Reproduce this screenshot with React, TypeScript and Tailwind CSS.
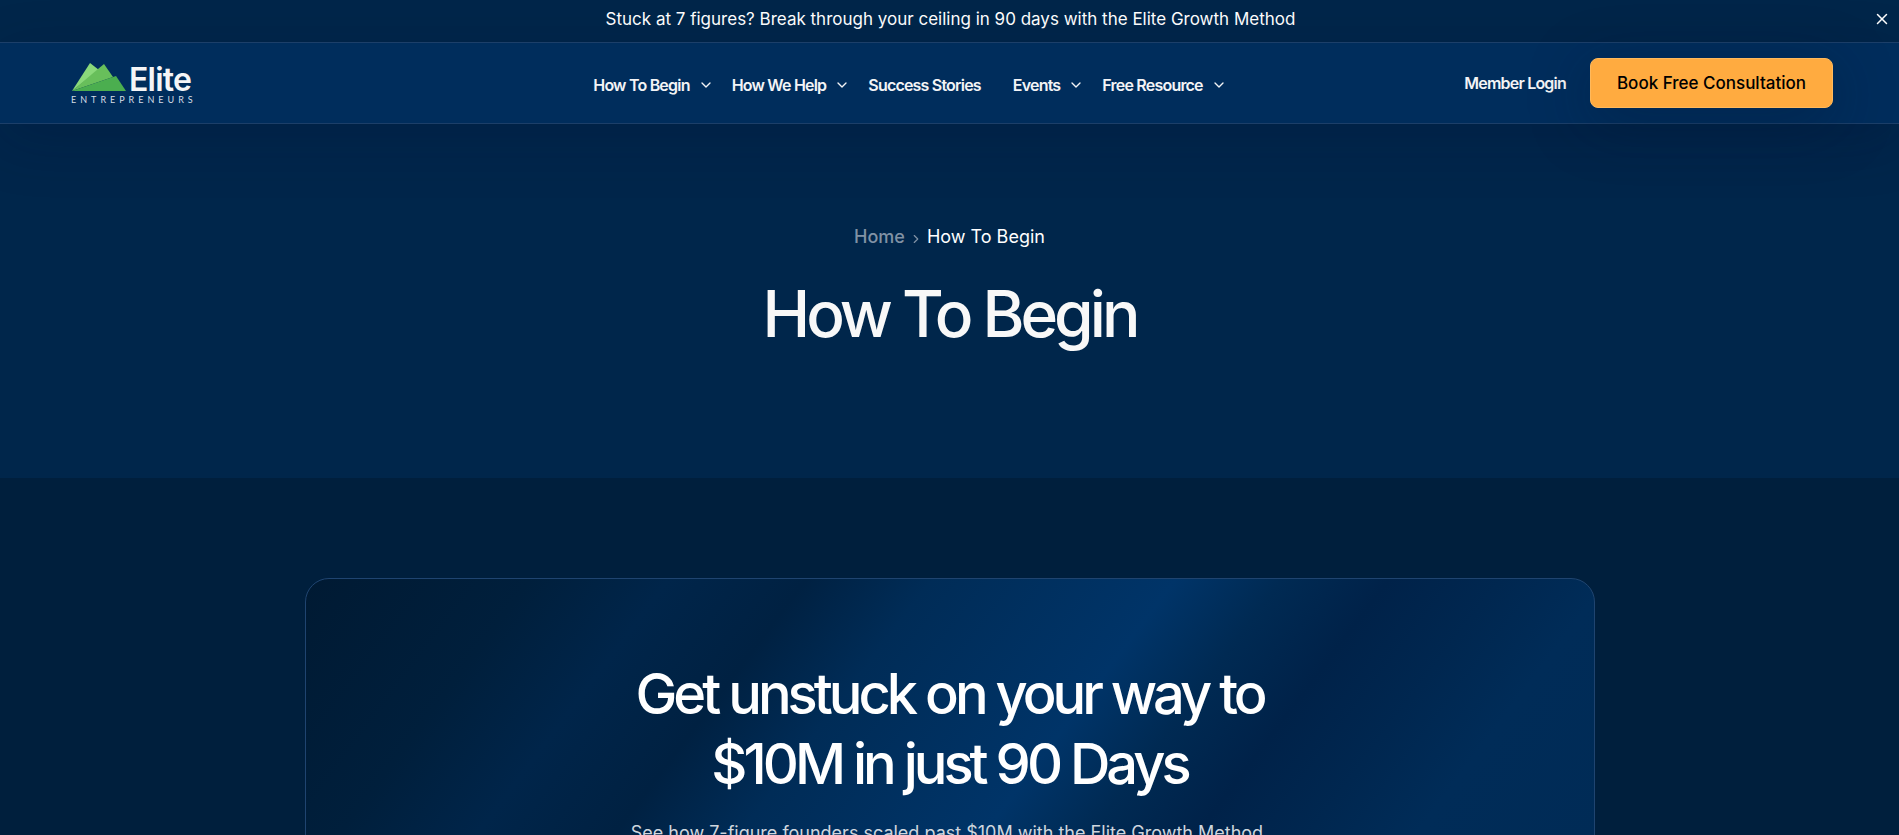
import { useState } from "react";
import { ChevronDown, ChevronRight, X } from "lucide-react";

interface NavItem {
  label: string;
  hasMenu: boolean;
}

const navItems: NavItem[] = [
  { label: "How To Begin", hasMenu: true },
  { label: "How We Help", hasMenu: true },
  { label: "Success Stories", hasMenu: false },
  { label: "Events", hasMenu: true },
  { label: "Free Resource", hasMenu: true },
];

function Logo() {
  return (
    <svg width="128" height="44" viewBox="0 0 128 44" role="img" aria-label="Elite Entrepreneurs">
      <polygon points="1,30 19,2 28,9" fill="#8ad97a" />
      <polygon points="1,30 27,8 33,3 42,16" fill="#68bf5b" />
      <polygon points="1,30 42,16 45,15 55,30" fill="#4bae4f" />
      <text x="58" y="30" fontSize="32" fontWeight="600" fill="#f5f5f7" className="font-['Inter',sans-serif] tracking-tight">
        Elite
      </text>
      <text x="0" y="42" fontSize="9" fill="#d5dde6" className="font-['Lato',sans-serif] tracking-[4px]">
        ENTREPRENEURS
      </text>
    </svg>
  );
}

export default function App() {
  const [showBanner, setShowBanner] = useState(true);

  return (
    <div className="min-h-screen bg-[#001f3d] font-['Inter',sans-serif] text-white">
      {showBanner && (
        <div className="flex items-center bg-[#00264a] px-2 pt-[7px] pb-[11px]">
          <p className="flex-1 pl-5 text-center text-[17px] leading-6">
            Stuck at 7 figures? Break through your ceiling in 90 days with the Elite Growth Method
          </p>
          <button type="button" aria-label="Close" onClick={() => setShowBanner(false)}>
            <X size={18} strokeWidth={2} />
          </button>
        </div>
      )}

      <header className="relative grid grid-cols-[11fr_auto_13fr] items-center border-y border-[#1c3f69] bg-[#002d5c] px-[66px] py-[15px] shadow-[0_16px_60px_rgba(0,16,48,0.2)]">
        <a href="#" className="justify-self-start pl-[5px]">
          <Logo />
        </a>
        <nav className="flex pt-1">
          {navItems.map((item) => (
            <a
              key={item.label}
              href="#"
              className="flex items-center px-4 text-base font-semibold tracking-tighter whitespace-nowrap text-gray-100"
            >
              {item.label}
              {item.hasMenu && <ChevronDown size={16} className="-mr-[14px] ml-2" />}
            </a>
          ))}
        </nav>
        <div className="flex items-center gap-6 justify-self-end">
          <a href="#" className="text-base font-semibold tracking-tighter text-gray-100">
            Member Login
          </a>
          <a
            href="#"
            className="rounded-lg border border-[#ffb95c] bg-[#ffab40] px-[26px] py-3 text-[17px] leading-6 font-medium text-black shadow-[0_12px_60px_rgba(0,24,48,0.35)]"
          >
            Book Free Consultation
          </a>
        </div>
      </header>

      <main>
        <section className="bg-[#00264b] px-6 pt-[99px] pb-[121px] text-center">
          <div className="flex items-center justify-center gap-1 text-lg">
            <a href="#" className="font-medium text-[#8092a5]">
              Home
            </a>
            <ChevronRight size={14} className="mt-1 text-[#8092a5]" />
            <span>How To Begin</span>
          </div>
          <h1 className="mt-5 text-[64px] leading-[86px] font-medium tracking-[-4px] text-[#f8f8f8]">
            How To Begin
          </h1>
        </section>

        <section className="px-6 py-[100px]">
          <div className="mx-auto max-w-[1290px] rounded-3xl border border-[#1f4470] bg-[linear-gradient(127deg,#001a33_0px,#001f3c_180px,#00254a_290px,#002142_400px,#002c57_500px,#003468_695px,#002a53_780px,#002249_865px,#002750_955px,#002c58_1040px,#002b56_1186px)] px-6 py-20 text-center">
            <h2 className="mx-auto max-w-[680px] text-[56px] leading-[70px] font-medium tracking-[-4px]">
              Get unstuck on your way to $10M in just 90 Days
            </h2>
            <p className="mt-5 text-lg text-[#cfd6de]">
              See how 7-figure founders scaled past $10M with the Elite Growth Method.
            </p>
          </div>
        </section>
      </main>
    </div>
  );
}
